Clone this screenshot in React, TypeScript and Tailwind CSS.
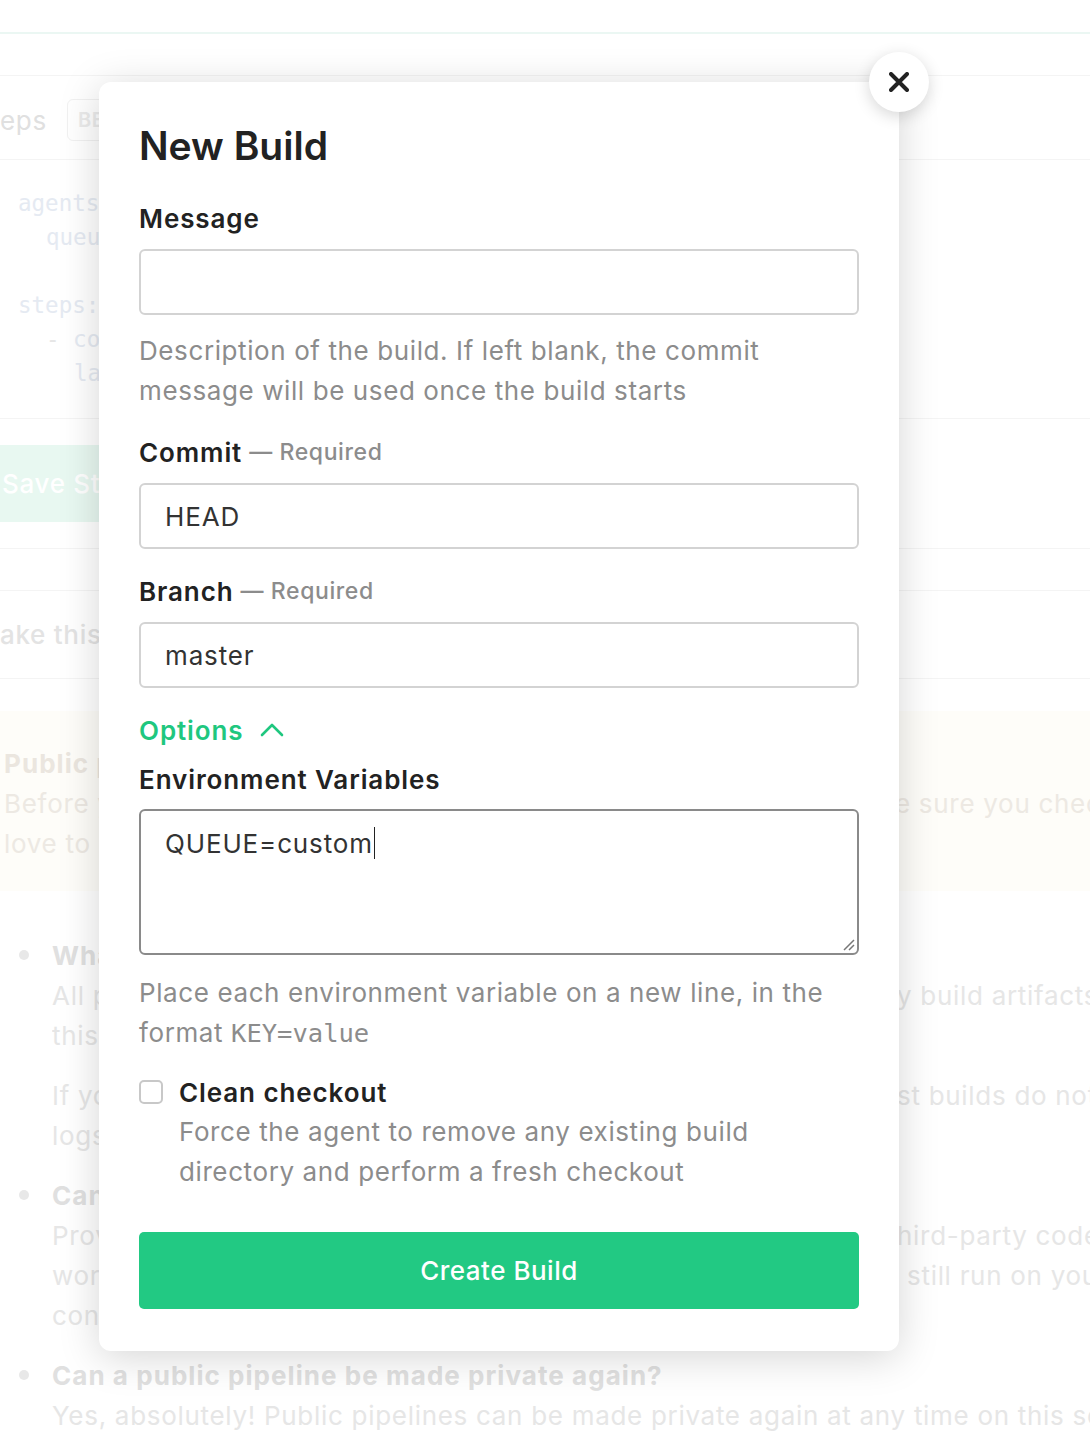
import React from "react";

interface LineProps {
  left: React.ReactNode;
  right?: React.ReactNode;
  leftWidth: string;
  className?: string;
}

// a row of faded page text; the middle of it is hidden by the dialog
const Line = ({ left, right, leftWidth, className = "" }: LineProps) => {
  return (
    <div className={`flex h-10 items-center whitespace-nowrap ${className}`}>
      <div className={`${leftWidth} shrink-0 overflow-hidden`}>{left}</div>
      {right && <div>{right}</div>}
    </div>
  );
};

const Bullet = () => (
  <span className="absolute left-[19px] top-[15px] h-[10px] w-[10px] rounded-full bg-[#e8e8e8]" />
);

const BackgroundPage = () => {
  return (
    <div className="text-[26px] tracking-[0.7px] text-[#e6e6e6]">
      <div className="h-[34px] border-b-2 border-[#ebf7f3]" />
      <div className="h-[42px] border-b border-[#f4f4f4]" />
      <div className="flex h-[84px] items-center gap-5 border-b border-[#f4f4f4] pt-[5px]">
        <span className="text-[#e0e0e0]">eps</span>
        <span className="flex h-[42px] items-center rounded-md border border-[#f1f1f1] px-[10px] text-[20px] font-semibold text-[#ebebeb]">
          BETA
        </span>
      </div>
      <div className="border-b border-[#f4f4f4] pb-[28px] pl-[18px] pt-[26px] font-['DejaVu_Sans_Mono',monospace] text-[22.5px] leading-[34px] tracking-normal text-[#e5eaf2]">
        <div>agents:</div>
        <div className="pl-[28px]">queue: default</div>
        <div>&nbsp;</div>
        <div>steps:</div>
        <div className="pl-[28px]">
          <span className="text-[#e6e6e6]">- </span>command: echo
        </div>
        <div className="pl-[56px]">label: hello</div>
      </div>
      <div className="border-b border-[#f4f4f4] pb-[26px] pt-[26px]">
        <div className="-ml-[22px] flex h-[77px] w-[200px] items-center rounded-md bg-[#e8f8f1] pl-[24px] font-medium text-white">
          Save Steps
        </div>
      </div>
      <div className="h-[42px] border-b border-[#f4f4f4]" />
      <div className="flex h-[88px] items-center border-b border-[#f4f4f4] font-medium text-[#e3e3e3]">
        ake this pipeline public
      </div>
      <div className="mt-[32px] h-[180px] bg-[#fefdf9] px-[4px] pt-[32px] text-[#ede9e3]">
        <Line leftWidth="w-[891px]" className="font-bold tracking-[1.05px] text-[#ebe6df]" left="Public pipelines" />
        <Line leftWidth="w-[891px]" left="Before you make this pipeline public, mak" right="e sure you check" />
        <Line leftWidth="w-[891px]" left="love to know what you think" />
      </div>
      <div className="mt-[44px] flex flex-col gap-5">
        <div className="relative pl-[52px]">
          <Bullet />
          <Line leftWidth="w-[845px]" className="font-bold tracking-[1.05px] text-[#e0e0e0]" left="What can people see?" />
          <Line leftWidth="w-[845px]" left="All pipeline steps, build output and an" right="y build artifacts" />
          <Line leftWidth="w-[845px]" left="this pipeline" />
          <Line leftWidth="w-[845px]" className="mt-5" left="If you want to hide the output, make sure tha" right="st builds do not" />
          <Line leftWidth="w-[845px]" left="logs" />
        </div>
        <div className="relative pl-[52px]">
          <Bullet />
          <Line leftWidth="w-[845px]" className="font-bold tracking-[1.05px] text-[#e0e0e0]" left="Can people run builds?" />
          <Line leftWidth="w-[845px]" left="Provided you are not running untrusted t" right="hird-party code" />
          <Line leftWidth="w-[855px]" left="work on the pipeline, builds will" right="still run on your" />
          <Line leftWidth="w-[845px]" left="content" />
        </div>
        <div className="relative pl-[52px]">
          <Bullet />
          <div className="flex h-10 items-center whitespace-nowrap font-bold tracking-[1.05px] text-[#e0e0e0]">
            Can a public pipeline be made private again?
          </div>
          <div className="flex h-10 items-center whitespace-nowrap">
            Yes, absolutely! Public pipelines can be made private again at any time on this screen.
          </div>
        </div>
      </div>
    </div>
  );
};

const FieldLabel = ({ children, required }: { children: React.ReactNode; required?: boolean }) => (
  <div className="flex h-9 items-center text-[26px] font-semibold tracking-[0.9px] text-[#222]">
    {children}
    {required && (
      <span className="ml-[7px] text-[23px] font-medium tracking-[0.6px] text-[#8c8c8c]">— Required</span>
    )}
  </div>
);

const TextInput = ({ value }: { value?: string }) => (
  <div className="mt-[13px] flex h-[66px] items-center rounded-[6px] border-2 border-[#d3d3d3] px-[24px] text-[26px] tracking-[0.85px] text-[#333]">
    {value}
  </div>
);

const HelpText = ({ children, className = "" }: { children: React.ReactNode; className?: string }) => (
  <p className={`text-[26px] leading-[40px] tracking-[0.6px] text-[#8c8c8c] ${className}`}>{children}</p>
);

const NewBuildDialog = () => {
  return (
    <div className="absolute left-[99px] top-[82px] w-[800px] rounded-[12px] bg-white px-10 pb-[42px] pt-10 shadow-[0_6px_40px_rgba(0,0,0,0.17)]">
      <button className="absolute -right-[30px] -top-[30px] flex h-[60px] w-[60px] items-center justify-center rounded-full bg-white shadow-[0_4px_16px_rgba(0,0,0,0.16)]">
        <svg width="20" height="20" viewBox="0 0 20 20" fill="none">
          <path d="M2 2 18 18M18 2 2 18" stroke="#222" strokeWidth="4" strokeLinecap="round" />
        </svg>
      </button>

      <h1 className="h-12 text-[39px] font-semibold leading-[48px] text-[#222]">New Build</h1>

      <div className="mt-[30px]">
        <FieldLabel>Message</FieldLabel>
        <TextInput />
        <HelpText className="mt-4">
          Description of the build. If left blank, the commit
          <br />
          message will be used once the build starts
        </HelpText>
      </div>

      <div className="mt-[23px]">
        <FieldLabel required>Commit</FieldLabel>
        <TextInput value="HEAD" />
      </div>

      <div className="mt-6">
        <FieldLabel required>Branch</FieldLabel>
        <TextInput value="master" />
      </div>

      <div className="mt-6 flex h-9 items-center gap-4 text-[26px] font-semibold tracking-[0.9px] text-[#1fc77f]">
        Options
        <svg width="24" height="14" viewBox="0 0 24 14" fill="none">
          <path d="M2 12 12 2l10 10" stroke="#1fc77f" strokeWidth="2.6" strokeLinecap="round" strokeLinejoin="round" />
        </svg>
      </div>

      <div className="mt-[13px]">
        <FieldLabel>Environment Variables</FieldLabel>
        <div className="relative mt-3 h-[146px] rounded-[6px] border-2 border-[#8a8a8a] px-[24px] pt-[10px] text-[26px] leading-[40px] tracking-[0.85px] text-[#333]">
          QUEUE=custom
          <span className="ml-[1px] inline-block h-[32px] w-[1.5px] translate-y-[6px] bg-[#222]" />
          <svg className="absolute bottom-[2px] right-[2px]" width="14" height="14" viewBox="0 0 14 14" fill="none">
            <path d="M13 3 3 13M13 8 8 13" stroke="#777" strokeWidth="1.5" />
          </svg>
        </div>
        <HelpText className="mt-[18px]">
          Place each environment variable on a new line, in the
          <br />
          format <span className="font-['DejaVu_Sans_Mono',monospace] text-[25.5px] tracking-normal">KEY=value</span>
        </HelpText>
      </div>

      <div className="mt-[19px] flex gap-4">
        <div className="mt-[8px] h-6 w-6 shrink-0 rounded-[5px] border-2 border-[#c8c8c8] bg-white" />
        <div>
          <div className="flex h-10 items-center text-[26px] font-semibold tracking-[0.9px] text-[#222]">
            Clean checkout
          </div>
          <HelpText>
            Force the agent to remove any existing build
            <br />
            directory and perform a fresh checkout
          </HelpText>
        </div>
      </div>

      <button className="mt-10 flex h-[77px] w-full items-center justify-center rounded-[5px] bg-[#22c983] text-[26px] font-medium tracking-[0.5px] text-white">
        Create Build
      </button>
    </div>
  );
};

export default function App() {
  return (
    <div className="relative h-[1438px] w-full overflow-hidden bg-white font-['Inter',sans-serif]">
      <BackgroundPage />
      <NewBuildDialog />
    </div>
  );
}
